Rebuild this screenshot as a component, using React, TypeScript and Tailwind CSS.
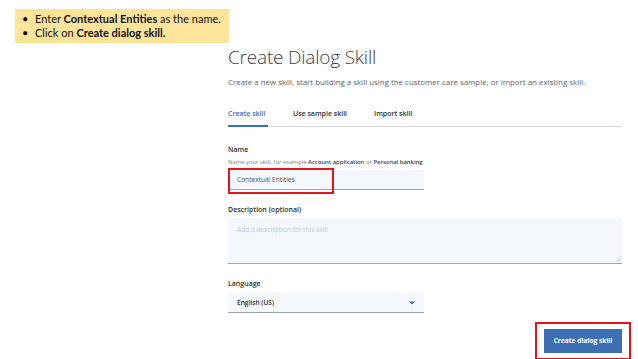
import React from "react";

const plex = { fontFamily: '"Open Sans", "Noto Sans", sans-serif' };

export default function App() {
  return (
    <div className="relative w-[638px] h-[359px] overflow-hidden bg-white" style={plex}>
      {/* annotation callout */}
      <div
        className="absolute left-[15px] top-[9px] w-[214px] h-[34px] bg-[#fde49b] pl-[7px] pt-[3px] text-[11px] leading-[14px] text-[#111]"
        style={{ fontFamily: 'Lato, "Open Sans", sans-serif' }}
      >
        <div className="flex">
          <span className="w-[13px]">•</span>
          <span>
            Enter <b>Contextual Entities</b> as the name.
          </span>
        </div>
        <div className="flex">
          <span className="w-[13px]">•</span>
          <span>
            Click on <b>Create dialog skill.</b>
          </span>
        </div>
      </div>

      <div className="ml-[228px] w-[394px] pt-[45px] flex flex-col">
        <h1 className="text-[19px] leading-[24px] font-light text-[#3b4148] tracking-[-0.2px]">
          Create Dialog Skill
        </h1>
        <p className="mt-[7px] text-[7.9px] leading-[12px] text-[#5a6470]">
          Create a new skill, start building a skill using the customer care sample, or import an existing skill.
        </p>

        {/* tabs */}
        <div className="mt-[20px] flex border-b border-[#d5d9dd]">
          <div className="w-[40px] pb-[5px] border-b-2 border-[#3d70b2] -mb-px text-[7px] leading-[12px] font-semibold text-[#3d70b2]">
            Create skill
          </div>
          <div className="ml-[25px] pb-[5px] text-[7px] leading-[12px] font-semibold text-[#2b2f33]">
            Use sample skill
          </div>
          <div className="ml-[27px] pb-[5px] text-[7px] leading-[12px] font-semibold text-[#2b2f33]">
            Import skill
          </div>
        </div>

        {/* name */}
        <label className="mt-[18px] text-[7px] leading-[10px] font-semibold text-[#2b2f33]">Name</label>
        <p className="mt-[3px] text-[5.9px] leading-[9px] text-[#7a838c]">
          Name your skill, for example <span className="font-semibold text-[#3b4148]">Account application</span> or{" "}
          <span className="font-semibold text-[#3b4148]">Personal banking</span>.
        </p>
        <div className="relative mt-[3px] w-[196px] h-[20px] bg-[#f4f7fb] border-b border-[#9aa4ad] flex items-center pl-[9px] text-[6.6px] text-[#4a535c]">
          Contextual Entities
          <div className="absolute left-0 top-[-2px] w-[106px] h-[26px] border-2 border-[#e3141c]" />
        </div>

        {/* description */}
        <label className="mt-[15px] text-[7px] leading-[10px] font-semibold text-[#2b2f33]">
          Description (optional)
        </label>
        <div className="relative mt-[3px] w-[394px] h-[46px] bg-[#f4f7fb] border-b border-[#9aa4ad] pl-[9px] pt-[7px] text-[6.6px] text-[#c3c9cf]">
          Add a description for this skill
          <svg className="absolute right-[1px] bottom-[1px]" width="5" height="5" viewBox="0 0 5 5">
            <path d="M4.5 0.5 L0.5 4.5 M4.5 2.5 L2.5 4.5" stroke="#b4bcc3" strokeWidth="0.8" />
          </svg>
        </div>

        {/* language */}
        <label className="mt-[15px] text-[7px] leading-[10px] font-semibold text-[#2b2f33]">Language</label>
        <div className="mt-[4px] w-[196px] h-[20px] bg-[#f4f7fb] border-b border-[#9aa4ad] flex items-center justify-between pl-[9px] pr-[9px] text-[6.6px] font-semibold text-[#2b2f33]">
          English (US)
          <svg width="6" height="4" viewBox="0 0 6 4">
            <path d="M0 0.5 H6 L3 3.5 Z" fill="#3d70b2" />
          </svg>
        </div>

        {/* button */}
        <div className="mt-[16px] flex justify-end">
          <div className="relative">
            <button className="w-[78px] h-[24px] bg-[#3d70b2] text-white text-[6.6px] font-bold flex items-center justify-center">
              Create dialog skill
            </button>
            <div className="absolute left-[-9px] top-[-7px] w-[96px] h-[38px] border-2 border-[#e3141c]" />
          </div>
        </div>
      </div>
    </div>
  );
}
